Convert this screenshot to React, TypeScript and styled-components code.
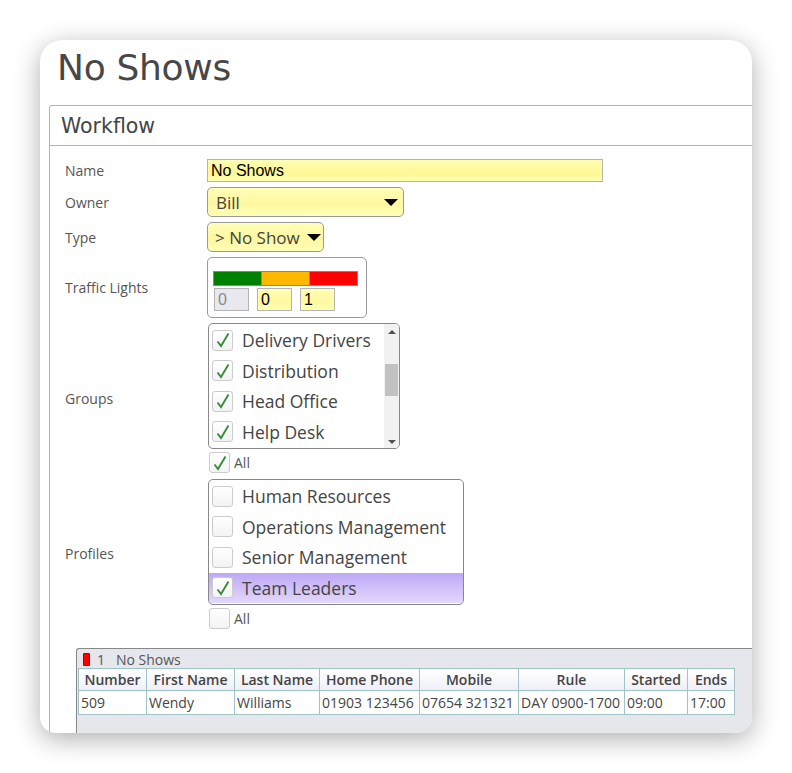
import React from 'react';
import styled, { createGlobalStyle } from 'styled-components';

const GlobalStyle = createGlobalStyle`
  html, body {
    margin: 0;
    padding: 0;
    background: #fff;
  }
  body {
    font-family: 'Open Sans', 'Liberation Sans', sans-serif;
    color: #444;
  }
`;

const Page = styled.div`
  padding: 40px 40px 0 40px;
  height: 773px;
  box-sizing: border-box;
`;

const Card = styled.div`
  width: 712px;
  height: 693px;
  background: #fff;
  border-radius: 22px 22px 16px 16px;
  box-shadow: 0 6px 26px rgba(0, 0, 0, 0.32);
  overflow: hidden;
  padding-top: 6px;
  box-sizing: border-box;
  display: flex;
  flex-direction: column;
`;

const Title = styled.h1`
  margin: 0 0 15px 17px;
  font-family: 'DejaVu Sans', sans-serif;
  font-weight: normal;
  font-size: 36px;
  line-height: 44px;
  color: #474747;
  letter-spacing: -0.3px;
`;

const Panel = styled.div`
  margin-left: 9px;
  width: 740px;
  flex: 1;
  border: 1px solid #b4b4b4;
  border-bottom: none;
  border-radius: 3px 0 0 0;
  display: flex;
  flex-direction: column;
`;

const PanelHeader = styled.div`
  height: 39px;
  border-bottom: 1px solid #b4b4b4;
  display: flex;
  align-items: center;
  padding-left: 11px;
  font-family: 'DejaVu Sans', sans-serif;
  font-size: 20.5px;
  color: #444;
`;

const Form = styled.div`
  display: grid;
  grid-template-columns: 142px auto;
  justify-content: start;
  row-gap: 5px;
  padding: 13px 0 0 15px;
  align-items: center;
`;

const Label = styled.div`
  font-size: 14px;
  color: #555;
`;

const TextInput = styled.div`
  width: 391px;
  height: 21px;
  border: 1px solid #b4b4b4;
  background: linear-gradient(#ffffb4, #fff696 60%, #ffffb0);
  font-family: 'Liberation Sans', Arial, sans-serif;
  font-size: 16px;
  color: #000;
  line-height: 21px;
  padding-left: 3px;
  box-sizing: content-box;
`;

const Select = styled.div<{ $w: number; $pad: number; $right: number }>`
  width: ${(p) => p.$w}px;
  height: 28px;
  border: 1px solid #999;
  border-radius: 5px;
  background: linear-gradient(#ffffb8, #fff7a0 55%, #ffffb8);
  display: flex;
  align-items: center;
  padding-left: ${(p) => p.$pad}px;
  padding-right: ${(p) => p.$right}px;
  box-sizing: content-box;
  font-size: 17px;
  color: #444;
  & > span {
    flex: 1;
  }
`;

const Arrow = styled.div`
  width: 0;
  height: 0;
  border-left: 7px solid transparent;
  border-right: 7px solid transparent;
  border-top: 7px solid #000;
`;

const LightsBox = styled.div`
  width: 153px;
  height: 46px;
  border: 1px solid #999;
  border-radius: 5px;
  padding: 13px 0 0 5px;
  box-sizing: content-box;
`;

const Bars = styled.div`
  display: flex;
  height: 15px;
`;

const Bar = styled.div<{ $c: string }>`
  width: 49px;
  box-sizing: border-box;
  background: ${(p) => p.$c};
  border: 1px solid #888;
  & + & {
    margin-left: -1px;
  }
`;

const LightInputs = styled.div`
  display: flex;
  gap: 8px;
  margin-top: 2px;
  padding-left: 1px;
`;

const LightInput = styled.div<{ $off?: boolean }>`
  width: 30px;
  height: 21px;
  border: 1px solid #b4b4b4;
  background: ${(p) => (p.$off ? '#e8e8ee' : 'linear-gradient(#ffffb4, #fff8a0 60%, #ffffb4)')};
  color: ${(p) => (p.$off ? '#888' : '#000')};
  font-family: 'Liberation Sans', Arial, sans-serif;
  font-size: 16px;
  line-height: 21px;
  padding-left: 3px;
`;

const ListBlock = styled.div`
  display: flex;
  flex-direction: column;
  gap: 3px;
`;

const ListBox = styled.div<{ $w: number }>`
  width: ${(p) => p.$w}px;
  height: 124px;
  border: 1px solid #888;
  border-radius: 5px;
  display: flex;
  overflow: hidden;
  margin-left: 1px;
`;

const Items = styled.div`
  flex: 1;
  display: flex;
  flex-direction: column;
  padding-top: 1px;
`;

const Item = styled.div<{ $sel?: boolean }>`
  height: 30.5px;
  display: flex;
  align-items: center;
  padding-left: 3px;
  gap: 9px;
  font-size: 17.5px;
  color: #444;
  background: ${(p) => (p.$sel ? 'linear-gradient(#bea8f6, #e2d8fc)' : 'transparent')};
`;

const Box = styled.div`
  width: 19px;
  height: 19px;
  border: 1px solid #ccc;
  border-radius: 3px;
  background: linear-gradient(#fff, #f3f3f3);
  display: flex;
  align-items: center;
  justify-content: center;
  flex-shrink: 0;
`;

const Scrollbar = styled.div`
  width: 15px;
  background: #f1f1f1;
  display: flex;
  flex-direction: column;
  align-items: center;
  justify-content: space-between;
  padding: 6px 0 4px;
  position: relative;
`;

const Thumb = styled.div`
  position: absolute;
  top: 40px;
  left: 1px;
  width: 13px;
  height: 32px;
  background: #c1c1c1;
`;

const SmallTri = styled.div<{ $up?: boolean }>`
  width: 0;
  height: 0;
  border-left: 4px solid transparent;
  border-right: 4px solid transparent;
  ${(p) => (p.$up ? 'border-bottom: 4px solid #505050;' : 'border-top: 4px solid #505050;')}
`;

const AllRow = styled.div`
  display: flex;
  align-items: center;
  gap: 4px;
  margin-left: 2px;
  font-size: 14px;
  color: #555;
`;

const Results = styled.div`
  margin: 19px 0 0 26px;
  flex: 1;
  background: #e6e7ec;
  border-top: 1px solid #888;
  border-left: 1px solid #888;
  border-radius: 3px 0 0 0;
  padding: 2px 0 0 1px;
`;

const ResultsHead = styled.div`
  display: flex;
  align-items: center;
  height: 17px;
  font-size: 14px;
  color: #555;
  padding-left: 5px;
`;

const RedFlag = styled.div`
  width: 5px;
  height: 11px;
  background: #f00;
  border: 1px solid #a00;
  border-radius: 1px;
  margin-right: 7px;
`;

const Table = styled.table`
  border-collapse: collapse;
  font-size: 14px;
  color: #444;
  background: #fff;
`;

const Th = styled.th<{ $w: number }>`
  width: ${(p) => p.$w}px;
  height: 22px;
  border: 1px solid #9fc3c7;
  background: linear-gradient(#ffffff, #eeeef8);
  font-weight: 600;
  padding: 0;
  text-align: center;
  box-sizing: border-box;
`;

const Td = styled.td`
  height: 23px;
  border: 1px solid #9fc3c7;
  padding: 0 2px;
  white-space: nowrap;
`;

const Check = () => (
  <svg width="16" height="16" viewBox="0 0 16 16">
    <path d="M2.5 9.5 L6 14 L13.5 1.5" fill="none" stroke="#3a8a3a" strokeWidth="1.9" />
  </svg>
);

const CheckBox = ({ on }: { on?: boolean }) => <Box>{on && <Check />}</Box>;

const groups = ['Delivery Drivers', 'Distribution', 'Head Office', 'Help Desk'];
const profiles = ['Human Resources', 'Operations Management', 'Senior Management', 'Team Leaders'];

const columns: [string, number][] = [
  ['Number', 68],
  ['First Name', 88],
  ['Last Name', 85],
  ['Home Phone', 100],
  ['Mobile', 99],
  ['Rule', 106],
  ['Started', 63],
  ['Ends', 47],
];

const row = ['509', 'Wendy', 'Williams', '01903 123456', '07654 321321', 'DAY 0900-1700', '09:00', '17:00'];

export default function App() {
  return (
    <Page>
      <GlobalStyle />
      <Card>
        <Title>No Shows</Title>
        <Panel>
          <PanelHeader>Workflow</PanelHeader>
          <Form>
            <Label>Name</Label>
            <TextInput>No Shows</TextInput>

            <Label>Owner</Label>
            <Select $w={182} $pad={8} $right={5}>
              <span>Bill</span>
              <Arrow />
            </Select>

            <Label>Type</Label>
            <Select $w={106} $pad={7} $right={2}>
              <span>&gt; No Show</span>
              <Arrow />
            </Select>

            <Label>Traffic Lights</Label>
            <LightsBox>
              <Bars>
                <Bar $c="#008000" />
                <Bar $c="#ffb800" />
                <Bar $c="#ff0000" />
              </Bars>
              <LightInputs>
                <LightInput $off>0</LightInput>
                <LightInput>0</LightInput>
                <LightInput>1</LightInput>
              </LightInputs>
            </LightsBox>

            <Label>Groups</Label>
            <ListBlock>
              <ListBox $w={190}>
                <Items>
                  {groups.map((g) => (
                    <Item key={g}>
                      <CheckBox on />
                      {g}
                    </Item>
                  ))}
                </Items>
                <Scrollbar>
                  <SmallTri $up />
                  <Thumb />
                  <SmallTri />
                </Scrollbar>
              </ListBox>
              <AllRow>
                <CheckBox on />
                All
              </AllRow>
            </ListBlock>

            <Label>Profiles</Label>
            <ListBlock style={{ marginTop: 1 }}>
              <ListBox $w={254}>
                <Items>
                  {profiles.map((p, i) => (
                    <Item key={p} $sel={i === 3}>
                      <CheckBox on={i === 3} />
                      {p}
                    </Item>
                  ))}
                </Items>
              </ListBox>
              <AllRow>
                <CheckBox />
                All
              </AllRow>
            </ListBlock>
          </Form>

          <Results>
            <ResultsHead>
              <RedFlag />
              1&nbsp;&nbsp;&nbsp;No Shows
            </ResultsHead>
            <Table>
              <thead>
                <tr>
                  {columns.map(([c, w]) => (
                    <Th key={c} $w={w}>
                      {c}
                    </Th>
                  ))}
                </tr>
              </thead>
              <tbody>
                <tr>
                  {row.map((v, i) => (
                    <Td key={i}>{v}</Td>
                  ))}
                </tr>
              </tbody>
            </Table>
          </Results>
        </Panel>
      </Card>
    </Page>
  );
}
